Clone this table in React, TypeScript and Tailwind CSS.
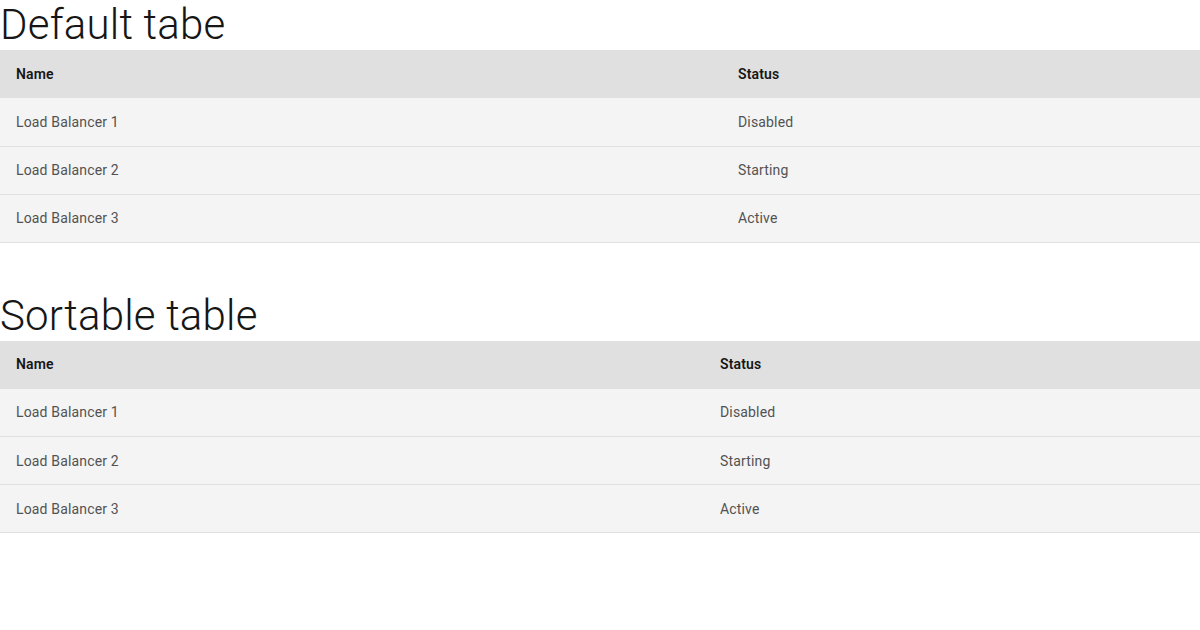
const ROWS = [
  { name: "Load Balancer 1", status: "Disabled" },
  { name: "Load Balancer 2", status: "Starting" },
  { name: "Load Balancer 3", status: "Active" },
];

function DataTable({ firstCol }: { firstCol: string }) {
  return (
    <table className="w-full border-collapse text-left text-[14px] tracking-[0.16px]">
      <thead>
        <tr className="h-12 bg-[#e0e0e0]">
          <th className={`${firstCol} px-4 font-semibold text-[#161616]`}>Name</th>
          <th className="px-4 font-semibold text-[#161616]">Status</th>
        </tr>
      </thead>
      <tbody>
        {ROWS.map((row) => (
          <tr key={row.name} className="h-12 border-b border-[#e0e0e0] bg-[#f4f4f4]">
            <td className="px-4 pt-px text-[#525252]">{row.name}</td>
            <td className="px-4 pt-px text-[#525252]">{row.status}</td>
          </tr>
        ))}
      </tbody>
    </table>
  );
}

export default function App() {
  return (
    <div className="min-h-[630px] w-[1200px] bg-white font-['Roboto','Inter',sans-serif] text-[#161616]">
      <h2 className="h-[50px] text-[42px] font-light leading-[50px] tracking-[0.2px]">Default tabe</h2>
      <DataTable firstCol="w-[722px]" />

      <h2 className="mt-12 h-[50px] text-[42px] font-light leading-[50px] tracking-[0.2px]">Sortable table</h2>
      <DataTable firstCol="w-[704px]" />
    </div>
  );
}
